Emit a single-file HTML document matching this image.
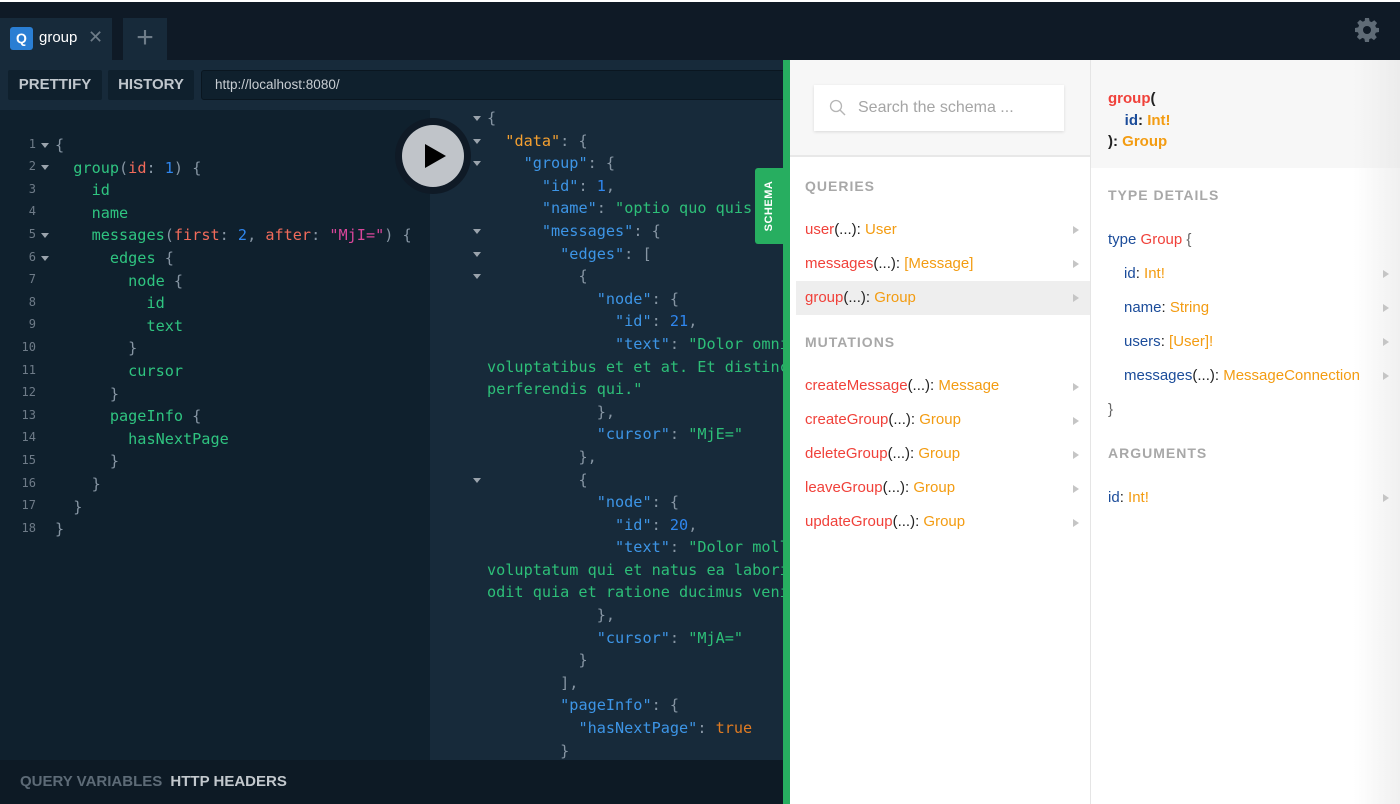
<!DOCTYPE html>
<html><head><meta charset="utf-8"><style>
*{margin:0;padding:0;box-sizing:border-box}
body{width:1400px;height:804px;overflow:hidden;background:#0f1a26;font-family:"Liberation Sans",sans-serif;position:relative}
.abs{position:absolute}
pre{font-family:"DejaVu Sans Mono","Liberation Mono",monospace;font-size:15.2px;line-height:22.6px;white-space:pre}
.g{color:#2fc480}.r{color:#f26b5b}.n{color:#2f86ee}.s{color:#d9469a}.p{color:#8695a3}
.k{color:#3d95e6}.o{color:#f5a030}.t{color:#e07b22}.sg{color:#2dbf78}
.ln{font-family:"DejaVu Sans Mono",monospace;font-size:12px;color:#6e7b88;position:absolute;width:36px;text-align:right}
.ar{position:absolute;width:0;height:0;border-left:4.5px solid transparent;border-right:4.5px solid transparent;border-top:5px solid #9aa3ac}
.sc{font-size:15px;position:absolute;left:805px;color:#222}
.red{color:#f0413a}.or{color:#f39c12}.bl{color:#1b4c9a}
.h{font-size:14px;font-weight:bold;color:#a8a8a8;letter-spacing:1px;position:absolute}
.tri{position:absolute;width:0;height:0;border-top:4px solid transparent;border-bottom:4px solid transparent;border-left:6px solid #c5c5c5}
.dt{font-size:15px;position:absolute;color:#222}
</style></head><body>
<div class="abs" style="left:0;top:0;width:1400px;height:2px;background:#fff"></div>
<div class="abs" style="left:0;top:18px;width:112px;height:42px;background:#172a3a"></div>
<div class="abs" style="left:10px;top:27px;width:23px;height:23px;background:#2a7ed3;border-radius:3px;color:#fff;font-weight:bold;font-size:14px;text-align:center;line-height:23px">Q</div>
<div class="abs" style="left:39px;top:29px;color:#fff;font-size:15px">group</div>
<div class="abs" style="left:88px;top:27px;color:#6e7c88;font-size:18px">✕</div>
<div class="abs" style="left:123px;top:18px;width:44px;height:42px;background:#172a3a;color:#6e7c88;font-size:30px;text-align:center;line-height:40px">+</div>
<svg class="abs" style="left:1355px;top:18px" width="24" height="24" viewBox="0 0 24 24"><path fill="#5f6b76" d="M10 1h4l.6 3.2 2 .9 2.7-1.9 2.8 2.8-1.9 2.7.9 2L24 11v4l-3.2.6-.9 2 1.9 2.7-2.8 2.8-2.7-1.9-2 .9L14 25h-4l-.6-3.2-2-.9-2.7 1.9-2.8-2.8 1.9-2.7-.9-2L0 15v-4l3.2-.6.9-2L2.2 5.7 5 2.9l2.7 1.9 2-.9z" transform="translate(0,-1)"/><circle cx="12" cy="12" r="4" fill="#0f1a26"/></svg>
<div class="abs" style="left:0;top:60px;width:783px;height:50px;background:#172a3a"></div>
<div class="abs" style="left:8px;top:70px;width:94px;height:30px;background:#0f202d;border-radius:2px;color:#c0c7cd;font-weight:bold;font-size:15px;text-align:center;line-height:30px">PRETTIFY</div>
<div class="abs" style="left:108px;top:70px;width:86px;height:30px;background:#0f202d;border-radius:2px;color:#c0c7cd;font-weight:bold;font-size:15px;text-align:center;line-height:30px">HISTORY</div>
<div class="abs" style="left:201px;top:70px;width:600px;height:30px;background:#0f202d;border:1px solid #0a1620;border-radius:3px;color:#c8ced3;font-size:13.5px;line-height:28px;padding-left:13px">http://localhost:8080/</div>
<div class="abs" style="left:0;top:110px;width:430px;height:650px;background:#0f202d"></div>
<div class="abs" style="left:430px;top:110px;width:353px;height:650px;background:#172a3a;overflow:hidden">
<pre class="abs" style="left:57px;top:-3px"><span class="p">{</span>
  <span class="o">"data"</span><span class="p">: {</span>
    <span class="k">"group"</span><span class="p">: {</span>
      <span class="k">"id"</span><span class="p">: </span><span class="n">1</span><span class="p">,</span>
      <span class="k">"name"</span><span class="p">: </span><span class="sg">"optio quo quis voluptas"</span><span class="p">,</span>
      <span class="k">"messages"</span><span class="p">: {</span>
        <span class="k">"edges"</span><span class="p">: [</span>
          <span class="p">{</span>
            <span class="k">"node"</span><span class="p">: {</span>
              <span class="k">"id"</span><span class="p">: </span><span class="n">21</span><span class="p">,</span>
              <span class="k">"text"</span><span class="p">: </span><span class="sg">"Dolor omnis</span>
<span class="sg">voluptatibus et et at. Et distinctio</span>
<span class="sg">perferendis qui."</span>
            <span class="p">},</span>
            <span class="k">"cursor"</span><span class="p">: </span><span class="sg">"MjE="</span>
          <span class="p">},</span>
          <span class="p">{</span>
            <span class="k">"node"</span><span class="p">: {</span>
              <span class="k">"id"</span><span class="p">: </span><span class="n">20</span><span class="p">,</span>
              <span class="k">"text"</span><span class="p">: </span><span class="sg">"Dolor mollitia</span>
<span class="sg">voluptatum qui et natus ea laboriosam</span>
<span class="sg">odit quia et ratione ducimus veniam</span>
            <span class="p">},</span>
            <span class="k">"cursor"</span><span class="p">: </span><span class="sg">"MjA="</span>
          <span class="p">}</span>
        <span class="p">],</span>
        <span class="k">"pageInfo"</span><span class="p">: {</span>
          <span class="k">"hasNextPage"</span><span class="p">: </span><span class="t">true</span>
        <span class="p">}</span></pre>
</div>
<div class="ar" style="left:473px;top:116px"></div>
<div class="ar" style="left:473px;top:139px"></div>
<div class="ar" style="left:473px;top:161px"></div>
<div class="ar" style="left:473px;top:229px"></div>
<div class="ar" style="left:473px;top:252px"></div>
<div class="ar" style="left:473px;top:274px"></div>
<div class="ar" style="left:473px;top:478px"></div>
<div class="abs" style="left:395px;top:118px;width:76px;height:76px;border-radius:50%;background:#0f1a26"></div>
<div class="abs" style="left:402px;top:125px;width:62px;height:62px;border-radius:50%;background:#c0c4c9"></div>
<svg class="abs" style="left:425px;top:144px" width="22" height="24"><path d="M0 0L21 12L0 24z" fill="#000"/></svg>
<div class="ln" style="left:0;top:137px">1</div><div class="ar" style="left:41px;top:143px"></div>
<div class="ln" style="left:0;top:159px">2</div><div class="ar" style="left:41px;top:165px"></div>
<div class="ln" style="left:0;top:182px">3</div>
<div class="ln" style="left:0;top:204px">4</div>
<div class="ln" style="left:0;top:227px">5</div><div class="ar" style="left:41px;top:233px"></div>
<div class="ln" style="left:0;top:250px">6</div><div class="ar" style="left:41px;top:256px"></div>
<div class="ln" style="left:0;top:272px">7</div>
<div class="ln" style="left:0;top:295px">8</div>
<div class="ln" style="left:0;top:317px">9</div>
<div class="ln" style="left:0;top:340px">10</div>
<div class="ln" style="left:0;top:363px">11</div>
<div class="ln" style="left:0;top:385px">12</div>
<div class="ln" style="left:0;top:408px">13</div>
<div class="ln" style="left:0;top:430px">14</div>
<div class="ln" style="left:0;top:453px">15</div>
<div class="ln" style="left:0;top:476px">16</div>
<div class="ln" style="left:0;top:498px">17</div>
<div class="ln" style="left:0;top:521px">18</div>
<pre class="abs" style="left:55px;top:134px"><span class="p">{</span>
  <span class="g">group</span><span class="p">(</span><span class="r">id</span><span class="p">: </span><span class="n">1</span><span class="p">) {</span>
    <span class="g">id</span>
    <span class="g">name</span>
    <span class="g">messages</span><span class="p">(</span><span class="r">first</span><span class="p">: </span><span class="n">2</span><span class="p">, </span><span class="r">after</span><span class="p">: </span><span class="s">"MjI="</span><span class="p">) {</span>
      <span class="g">edges</span><span class="p"> {</span>
        <span class="g">node</span><span class="p"> {</span>
          <span class="g">id</span>
          <span class="g">text</span>
        <span class="p">}</span>
        <span class="g">cursor</span>
      <span class="p">}</span>
      <span class="g">pageInfo</span><span class="p"> {</span>
        <span class="g">hasNextPage</span>
      <span class="p">}</span>
    <span class="p">}</span>
  <span class="p">}</span>
<span class="p">}</span></pre>
<div class="abs" style="left:0;top:760px;width:783px;height:44px;background:#0d1a25"></div>
<div class="abs" style="left:20px;top:773px;font-size:15px;font-weight:bold;color:#5d6b77">QUERY VARIABLES <span style="color:#c2c8cd;margin-left:4px">HTTP HEADERS</span></div>
<div class="abs" style="left:755px;top:168px;width:29px;height:76px;background:#27ae60;border-radius:3px 0 0 3px"></div>
<div class="abs" style="left:731px;top:196px;width:76px;height:20px;transform:rotate(-90deg);color:#fff;font-size:11px;font-weight:bold;text-align:center;line-height:20px;letter-spacing:0.5px">SCHEMA</div>
<div class="abs" style="left:783px;top:60px;width:7px;height:744px;background:#27ae60"></div>
<div class="abs" style="left:790px;top:60px;width:300px;height:744px;background:#fff"></div>
<div class="abs" style="left:790px;top:60px;width:300px;height:97px;background:#f7f7f7;border-bottom:2px solid #e8e8e8"></div>
<div class="abs" style="left:814px;top:85px;width:250px;height:46px;background:#fff;box-shadow:0 1px 3px rgba(0,0,0,.12)"></div>
<svg class="abs" style="left:829px;top:99px" width="18" height="18"><circle cx="7" cy="7" r="5.5" stroke="#b5b5b5" stroke-width="1.3" fill="none"/><path d="M11 11L16 16" stroke="#b5b5b5" stroke-width="1.4"/></svg>
<div class="abs" style="left:858px;top:99px;font-size:16px;color:#a5a5a5">Search the schema ...</div>
<div class="abs" style="left:1090px;top:60px;width:1px;height:744px;background:#e5e5e5"></div>
<div class="h" style="left:805px;top:178px">QUERIES</div>
<div class="abs" style="left:796px;top:281px;width:294px;height:34px;background:#eeeeee"></div>
<div class="sc" style="top:221px"><span class="red">user</span>(...): <span class="or">User</span></div>
<div class="sc" style="top:255px"><span class="red">messages</span>(...): <span class="or">[Message]</span></div>
<div class="sc" style="top:289px"><span class="red">group</span>(...): <span class="or">Group</span></div>
<div class="tri" style="left:1073px;top:226px"></div><div class="tri" style="left:1073px;top:260px"></div><div class="tri" style="left:1073px;top:294px"></div>
<div class="h" style="left:805px;top:334px">MUTATIONS</div>
<div class="sc" style="top:377px"><span class="red">createMessage</span>(...): <span class="or">Message</span></div>
<div class="sc" style="top:411px"><span class="red">createGroup</span>(...): <span class="or">Group</span></div>
<div class="sc" style="top:445px"><span class="red">deleteGroup</span>(...): <span class="or">Group</span></div>
<div class="sc" style="top:479px"><span class="red">leaveGroup</span>(...): <span class="or">Group</span></div>
<div class="sc" style="top:513px"><span class="red">updateGroup</span>(...): <span class="or">Group</span></div>
<div class="tri" style="left:1073px;top:383px"></div><div class="tri" style="left:1073px;top:417px"></div><div class="tri" style="left:1073px;top:451px"></div><div class="tri" style="left:1073px;top:485px"></div><div class="tri" style="left:1073px;top:519px"></div>
<div class="abs" style="left:1091px;top:60px;width:309px;height:744px;background:linear-gradient(to right,#fff 85%,#f0f0f0)"></div>
<div class="abs" style="left:1091px;top:60px;width:309px;height:108px;background:linear-gradient(to right,#f7f7f7 85%,#ececec)"></div>
<div class="dt" style="left:1108px;top:88px;font-weight:bold;line-height:21.5px;font-size:15px"><span class="red">group</span>(<br>&nbsp;&nbsp;&nbsp;&nbsp;<span class="bl">id</span>: <span class="or">Int!</span><br>): <span class="or">Group</span></div>
<div class="h" style="left:1108px;top:187px">TYPE DETAILS</div>
<div class="dt" style="left:1108px;top:231px"><span class="bl">type</span> <span class="red">Group</span> <span style="color:#666">{</span></div>
<div class="dt" style="left:1124px;top:265px"><span class="bl">id</span>: <span class="or">Int!</span></div>
<div class="dt" style="left:1124px;top:299px"><span class="bl">name</span>: <span class="or">String</span></div>
<div class="dt" style="left:1124px;top:333px"><span class="bl">users</span>: <span class="or">[User]!</span></div>
<div class="dt" style="left:1124px;top:367px"><span class="bl">messages</span>(...): <span class="or">MessageConnection</span></div>
<div class="dt" style="left:1108px;top:401px;color:#666">}</div>
<div class="tri" style="left:1383px;top:270px"></div><div class="tri" style="left:1383px;top:304px"></div><div class="tri" style="left:1383px;top:338px"></div><div class="tri" style="left:1383px;top:372px"></div>
<div class="h" style="left:1108px;top:445px">ARGUMENTS</div>
<div class="dt" style="left:1108px;top:489px"><span class="bl">id</span>: <span class="or">Int!</span></div>
<div class="tri" style="left:1383px;top:494px"></div>
</body></html>
